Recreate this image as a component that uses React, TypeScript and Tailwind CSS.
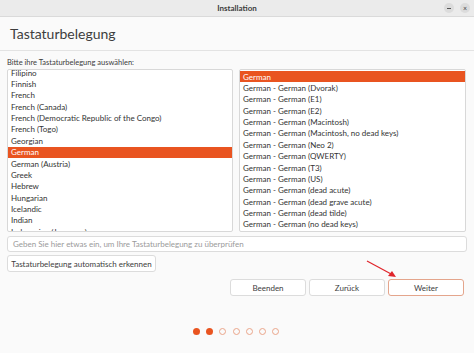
import React from "react";

const leftItems = [
  "Filipino",
  "Finnish",
  "French",
  "French (Canada)",
  "French (Democratic Republic of the Congo)",
  "French (Togo)",
  "Georgian",
  "German",
  "German (Austria)",
  "Greek",
  "Hebrew",
  "Hungarian",
  "Icelandic",
  "Indian",
  "Indonesian (Javanese)",
];

const rightItems = [
  "German",
  "German - German (Dvorak)",
  "German - German (E1)",
  "German - German (E2)",
  "German - German (Macintosh)",
  "German - German (Macintosh, no dead keys)",
  "German - German (Neo 2)",
  "German - German (QWERTY)",
  "German - German (T3)",
  "German - German (US)",
  "German - German (dead acute)",
  "German - German (dead grave acute)",
  "German - German (dead tilde)",
  "German - German (no dead keys)",
];

const Row = ({ label, selected }: { label: string; selected?: boolean }) => (
  <div
    className={`flex h-[11.36px] shrink-0 items-center px-[3px] leading-none whitespace-nowrap ${
      selected ? "bg-[#e95420] text-white" : "text-[#333333]"
    }`}
  >
    {label}
  </div>
);

const Button = ({ label, accent }: { label: string; accent?: boolean }) => (
  <button
    className={`flex h-[17px] w-[76px] items-center justify-center rounded-[3px] border bg-white text-[8px] text-[#3d3d3d] ${
      accent ? "border-[#e4a58c]" : "border-[#dcdcdc]"
    }`}
  >
    {label}
  </button>
);

export default function App() {
  const font = { fontFamily: "Lato, 'Noto Sans', sans-serif" };
  return (
    <div
      className="relative flex h-[353px] w-[474px] flex-col overflow-hidden bg-[#fafafa] text-[8px]"
      style={font}
    >
      {/* title bar */}
      <div className="relative flex h-[17px] shrink-0 items-center justify-center border-b border-[#dadada] bg-[#ebebeb]">
        <span className="text-[8px] font-bold text-[#3d3d3d]">Installation</span>
        <div className="absolute right-[4px] top-[3px] flex gap-[6px]">
          <div className="flex h-[10px] w-[10px] items-center justify-center rounded-full bg-[#dcdcdc]">
            <div className="h-[1px] w-[4px] bg-[#555]" />
          </div>
          <div className="flex h-[10px] w-[10px] items-center justify-center rounded-full bg-[#dcdcdc] text-[7px] leading-none text-[#444]">
            ×
          </div>
        </div>
      </div>

      {/* heading */}
      <div className="flex h-[34px] shrink-0 items-center border-b border-[#e3e3e3] px-[10px]">
        <h1 className="text-[14px] text-[#3d3d3d]">Tastaturbelegung</h1>
      </div>

      <div className="flex flex-col px-[7px]">
        <div className="mt-[6px] h-[11px] text-[7.5px] leading-[11px] text-[#3d3d3d]">
          Bitte ihre Tastaturbelegung auswählen:
        </div>

        <div className="mt-[1px] flex gap-[6px]">
          <div className="flex h-[163px] w-[226px] flex-col overflow-hidden rounded-[2px] border border-[#d8d8d8] bg-white">
            <div className="mt-[-3px] flex flex-col">
              {leftItems.map((it) => (
                <Row key={it} label={it} selected={it === "German"} />
              ))}
            </div>
          </div>
          <div className="flex h-[163px] w-[227px] flex-col overflow-hidden rounded-[2px] border border-[#d8d8d8] bg-white">
            <div className="mt-[1px] flex flex-col">
              {rightItems.map((it, i) => (
                <Row key={it} label={it} selected={i === 0} />
              ))}
            </div>
          </div>
        </div>

        <div className="mt-[4px] flex h-[16px] items-center rounded-[3px] border border-[#dcdcdc] bg-white px-[5px] text-[#9a9a9a]">
          Geben Sie hier etwas ein, um Ihre Tastaturbelegung zu überprüfen
        </div>

        <div className="mt-[3px] flex">
          <button className="flex h-[17px] w-[149px] items-center justify-center rounded-[3px] border border-[#dcdcdc] bg-white text-[8px] text-[#3d3d3d]">
            Tastaturbelegung automatisch erkennen
          </button>
        </div>

        <div className="mt-[7px] flex justify-end gap-[3px] pr-[3px]">
          <Button label="Beenden" />
          <Button label="Zurück" />
          <Button label="Weiter" accent />
        </div>
      </div>

      <div className="mt-[32px] flex justify-center gap-[6.3px] pr-[2px]">
        {[0, 1, 2, 3, 4, 5, 6].map((i) => (
          <div
            key={i}
            className={`h-[7px] w-[7px] rounded-full ${
              i < 2 ? "bg-[#e95420]" : "border border-[#eaa58a]"
            }`}
          />
        ))}
      </div>

      {/* red annotation arrow */}
      <svg
        className="absolute left-[360px] top-[255px]"
        width="44"
        height="28"
        viewBox="0 0 44 28"
      >
        <line x1="7" y1="6" x2="33" y2="20" stroke="#e0242a" strokeWidth="1.2" />
        <polygon points="36,22 28,21 32,16" fill="#e0242a" />
      </svg>
    </div>
  );
}
